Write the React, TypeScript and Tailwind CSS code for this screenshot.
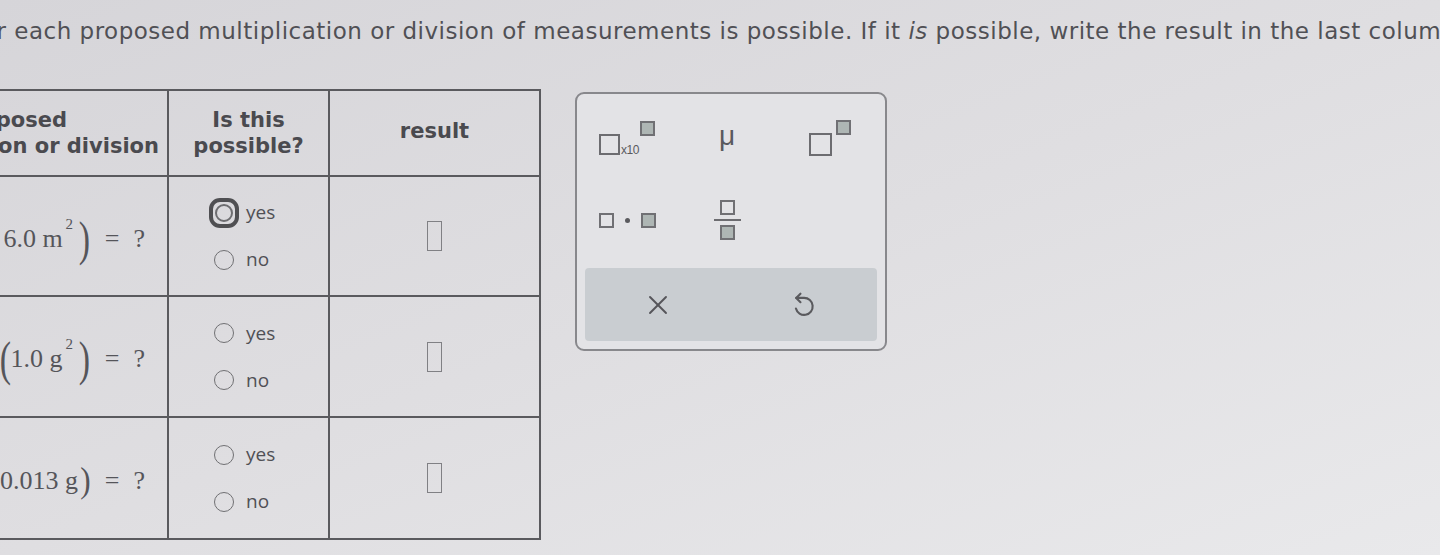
import { X } from "lucide-react";

const sans = "font-['DejaVu_Sans',Verdana,sans-serif]";
const serif = "font-['Liberation_Serif','Times_New_Roman',serif]";

function Radio({ label, selected }: { label: string; selected?: boolean }) {
    return (
        <div className="flex h-[28px] items-center">
            <div className="flex w-[28px] items-center justify-center">
                {selected ? (
                    <div className="flex h-[30px] w-[30px] shrink-0 items-center justify-center rounded-[11px] border-[4px] border-[#4f4f52]">
                        <div className="h-[18px] w-[18px] rounded-full border-2 border-[#6d6d70]" />
                    </div>
                ) : (
                    <div className="h-[20px] w-[20px] rounded-full border-[1.5px] border-[#707073]" />
                )}
            </div>
            <span className="ml-[8px] font-['Open_Sans',sans-serif] text-[19px] leading-none text-[#505055]">{label}</span>
        </div>
    );
}

function RadioCell({ selected }: { selected?: boolean }) {
    return (
        <div className="flex flex-col justify-center gap-[19px] border-r-2 border-b-2 border-[#5a5a5e] pl-[41px]">
            <Radio label="yes" selected={selected} />
            <Radio label="no" />
        </div>
    );
}

function ResultCell() {
    return (
        <div className="flex items-center justify-center border-r-2 border-b-2 border-[#5a5a5e]">
            <div className="h-[30px] w-[15px] border-[1.5px] border-[#808084]" />
        </div>
    );
}

function Paren({ ch, scale }: { ch: string; scale: string }) {
    return <span className={`inline-block ${scale}`}>{ch}</span>;
}

function SmallBox({ filled }: { filled?: boolean }) {
    return (
        <div className={`h-[15px] w-[15px] border-2 border-[#707074] ${filled ? "bg-[#aeb6b4]" : ""}`} />
    );
}

function UndoIcon() {
    return (
        <svg width="34" height="34" viewBox="0 0 24 24" fill="none" stroke="#5a5a5e" strokeWidth="1.5" strokeLinecap="round" strokeLinejoin="round">
            <path d="M9.5 4 L6.5 7 L9.5 10" />
            <path d="M6.5 7 H12 A6 6 0 1 1 6.3 14.5" />
        </svg>
    );
}

export default function App() {
    return (
        <div className="h-[555px] w-[1440px] overflow-hidden bg-gradient-to-br from-[#d6d5d9] via-[#dfdee1] to-[#e9e9eb] text-[#4d4d52]">
            <p className={`${sans} ml-[-31px] whitespace-nowrap pt-[17px] text-[23px] leading-[28px] tracking-[0.5px] text-[#505055]`}>
                For each proposed multiplication or division of measurements is possible. If it <i>is</i> possible, write the result in the last column.
            </p>

            <div className="mt-[44px] flex items-start">
                {/* table */}
                <div className="grid grid-cols-[169px_161px_211px] grid-rows-[86px_120px_121px_122px] border-t-2 border-[#5a5a5e]">
                    <div className={`${sans} flex items-center justify-end overflow-hidden whitespace-nowrap border-r-2 border-b-2 border-[#5a5a5e] pr-[8px] text-[21px] font-bold leading-[26px] text-[#4a4a4f]`}>
                        <div className="shrink-0 text-center">
                            Proposed
                            <br />
                            multiplication or division
                        </div>
                    </div>
                    <div className={`${sans} flex items-center justify-center border-r-2 border-b-2 border-[#5a5a5e] text-center text-[21px] font-bold leading-[26px] text-[#4a4a4f]`}>
                        Is this
                        <br />
                        possible?
                    </div>
                    <div className={`${sans} flex items-center justify-center border-r-2 border-b-2 border-[#5a5a5e] pb-[3px] text-[21px] font-bold text-[#4a4a4f]`}>
                        result
                    </div>

                    {/* row 1 */}
                    <div className={`${serif} flex items-center justify-end overflow-hidden whitespace-nowrap border-r-2 border-b-2 border-[#5a5a5e] pr-[22px] pt-[4px] text-[26px] text-[#55555a]`}>
                        <span className="shrink-0">6.0 m</span>
                        <span className="mb-[28px] ml-[3px] text-[15px]">2</span>
                        <span className="ml-[7px]"><Paren ch=")" scale="scale-y-[1.9] scale-x-[1.3]" /></span>
                        <span className="ml-[16px]">=</span>
                        <span className="ml-[14px]">?</span>
                    </div>
                    <RadioCell selected />
                    <ResultCell />

                    {/* row 2 */}
                    <div className={`${serif} flex items-center justify-end overflow-hidden whitespace-nowrap border-r-2 border-b-2 border-[#5a5a5e] pr-[22px] pt-[4px] text-[26px] text-[#55555a]`}>
                        <span className="shrink-0"><Paren ch="(" scale="scale-y-[1.9] scale-x-[1.3]" /></span>
                        <span className="ml-[1px] shrink-0">1.0 g</span>
                        <span className="mb-[28px] ml-[3px] text-[15px]">2</span>
                        <span className="ml-[7px]"><Paren ch=")" scale="scale-y-[1.9] scale-x-[1.3]" /></span>
                        <span className="ml-[16px]">=</span>
                        <span className="ml-[14px]">?</span>
                    </div>
                    <RadioCell />
                    <ResultCell />

                    {/* row 3 */}
                    <div className={`${serif} flex items-center justify-end overflow-hidden whitespace-nowrap border-r-2 border-b-2 border-[#5a5a5e] pr-[22px] pt-[4px] text-[26px] text-[#55555a]`}>
                        <span className="shrink-0">0.013 g</span>
                        <span className="ml-[3px]"><Paren ch=")" scale="scale-y-[1.4] scale-x-[1.2]" /></span>
                        <span className="ml-[15px]">=</span>
                        <span className="ml-[14px]">?</span>
                    </div>
                    <RadioCell />
                    <ResultCell />
                </div>

                {/* palette */}
                <div className="ml-[34px] mt-[3px] flex h-[259px] w-[312px] flex-col rounded-[9px] border-2 border-[#88888c] bg-[#e3e3e6] pt-[4px]">
                    <div className="flex h-[80px] items-center">
                        <div className="flex w-[100px] justify-center">
                            <div className="flex items-start">
                                <div className="mt-[13px] h-[21px] w-[21px] border-2 border-[#6c6c70]" />
                                <span className="mt-[23px] ml-[1px] font-['Liberation_Sans',sans-serif] text-[12px] leading-none tracking-[-0.5px] text-[#5a5a5e]">x10</span>
                                <div className="ml-[1px]"><SmallBox filled /></div>
                            </div>
                        </div>
                        <div className="flex w-[100px] justify-center">
                            <span className="mb-[4px] font-['Liberation_Sans',sans-serif] text-[28px] leading-none text-[#5a5a5e]">μ</span>
                        </div>
                        <div className="flex w-[100px] justify-center">
                            <div className="ml-[6px] flex items-start">
                                <div className="mt-[13px] h-[23px] w-[23px] border-2 border-[#6c6c70]" />
                                <div className="ml-[4px]"><SmallBox filled /></div>
                            </div>
                        </div>
                    </div>
                    <div className="flex h-[84px] items-center">
                        <div className="flex w-[100px] items-center justify-center gap-[11px]">
                            <SmallBox />
                            <div className="h-[5px] w-[5px] rounded-full bg-[#5a5a5e]" />
                            <SmallBox filled />
                        </div>
                        <div className="flex w-[100px] flex-col items-center gap-[4px]">
                            <SmallBox />
                            <div className="h-[2px] w-[27px] bg-[#6c6c70]" />
                            <SmallBox filled />
                        </div>
                    </div>
                    <div className="mx-[8px] mt-[6px] grid h-[73px] grid-cols-2 items-center rounded-[4px] bg-[#c9cdd1]">
                        <div className="flex justify-center">
                            <X size={32} strokeWidth={1.4} color="#55555a" />
                        </div>
                        <div className="flex justify-center">
                            <UndoIcon />
                        </div>
                    </div>
                </div>
            </div>
        </div>
    );
}
